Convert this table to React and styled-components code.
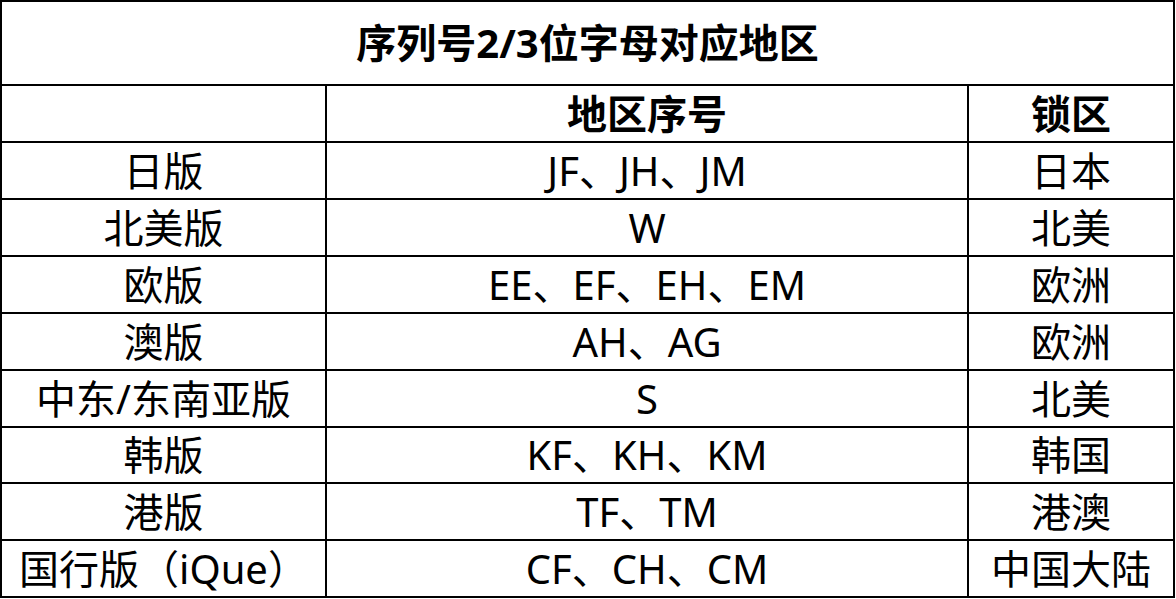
import React from 'react';
import styled, { createGlobalStyle } from 'styled-components';

const GlobalStyle = createGlobalStyle`
    html, body {
        margin: 0;
        padding: 0;
        background: #fff;
    }`;

const Table = styled.div`
    display: grid;
    grid-template-columns: 323px 640px 204px;
    grid-template-rows: 82px 55px 55px 55px 55px 55px 55px 54px 55px 55px;
    gap: 2px;
    padding: 2px;
    width: 1171px;
    background: #000;
    font-family: "Noto Sans", "Noto Sans CJK SC", sans-serif;
    color: #000`;

const Cell = styled.div`
    display: flex;
    align-items: center;
    justify-content: center;
    background: #fff;
    font-size: 40px;
    font-weight: ${p => (p.$bold ? 700 : 400)};
    white-space: nowrap;
    line-height: 1`;

const Title = styled(Cell)`
    grid-column: 1 / 4;
    font-weight: 700`;

const rows = [
    ['日版', 'JF、JH、JM', '日本'],
    ['北美版', 'W', '北美'],
    ['欧版', 'EE、EF、EH、EM', '欧洲'],
    ['澳版', 'AH、AG', '欧洲'],
    ['中东/东南亚版', 'S', '北美'],
    ['韩版', 'KF、KH、KM', '韩国'],
    ['港版', 'TF、TM', '港澳'],
    ['国行版（iQue）', 'CF、CH、CM', '中国大陆'],
];

export default function App() {
    return (
        <>
            <GlobalStyle />
            <Table>
                <Title>序列号2/3位字母对应地区</Title>
                <Cell />
                <Cell $bold>地区序号</Cell>
                <Cell $bold>锁区</Cell>
                {rows.map(r => r.map((text, i) => (
                    <Cell key={r[0] + i}>{text}</Cell>
                )))}
            </Table>
        </>
    );
}
